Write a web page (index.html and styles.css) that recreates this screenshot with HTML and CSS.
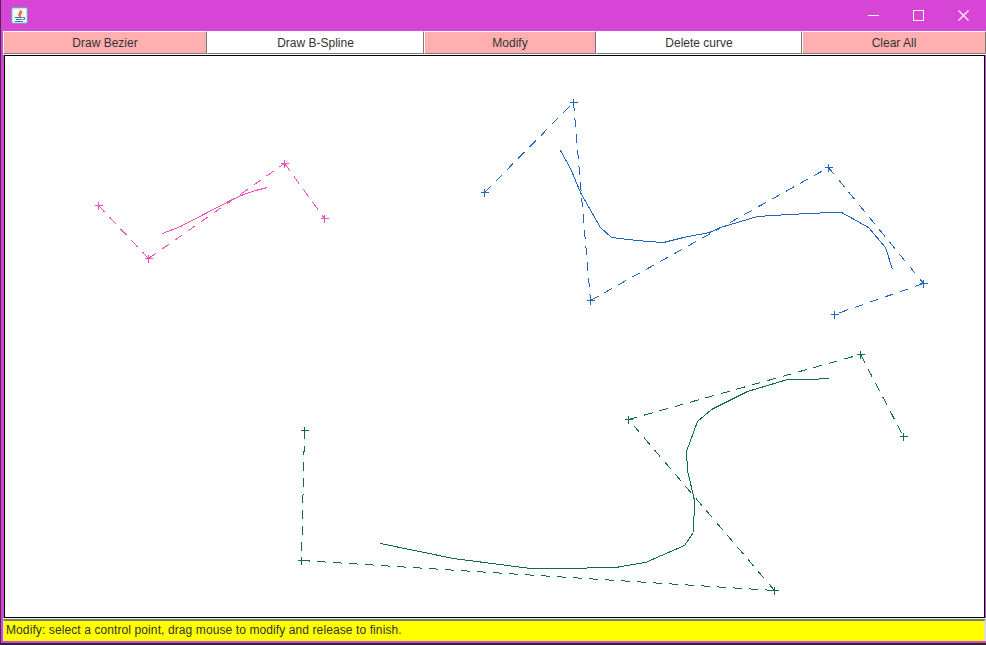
FILE: index.html
```html
<!DOCTYPE html>
<html lang="en">

<head>
    <meta charset="UTF-8">
    <title>Curves</title>
    <link rel="stylesheet" href="styles.css">
</head>

<body>
    <div class="window">
        <div class="titlebar">
            <svg class="app-icon" width="17" height="17" viewBox="0 0 17 17">
                <rect x="0.5" y="0.5" width="16" height="16" rx="2" fill="#cfdfea" stroke="#7f98ac" />
                <rect x="2" y="2" width="13" height="13" rx="1" fill="#f4f8fa" />
                <path d="M9.500 3C10.500 5 7 6 8 8.500C8.500 9.500 9 9.500 9 9.500C8.500 8 10.500 6.500 11 4.500" fill="none" stroke="#e8762a" stroke-width="1.500" />
                <path d="M4 10.500H11M5 12.500H11M4 14.500H12" stroke="#3f76a0" stroke-width="1" />
                <path d="M11.500 10.500H13.500V12.500H12" fill="none" stroke="#3f76a0" stroke-width="1" />
            </svg>
            <div class="window-controls">
                <svg width="11" height="11" viewBox="0 0 11 11"><path d="M0 5.500H11" stroke="#fff" /></svg>
                <svg width="11" height="11" viewBox="0 0 11 11"><rect x="0.500" y="0.500" width="10" height="10" fill="none" stroke="#fff" /></svg>
                <svg width="11" height="11" viewBox="0 0 11 11"><path d="M0.500 0.500L10.500 10.500M10.500 0.500L0.500 10.500" stroke="#fff" stroke-width="1.200" /></svg>
            </div>
        </div>

        <div class="toolbar">
            <button class="tool tool-bezier pink">Draw Bezier</button>
            <button class="tool tool-bspline">Draw B-Spline</button>
            <button class="tool tool-modify pink">Modify</button>
            <button class="tool tool-delete">Delete curve</button>
            <button class="tool tool-clear pink">Clear All</button>
        </div>

        <div class="canvas">
            <!-- viewBox is in window coordinates, canvas inner box starts at 5,56 -->
            <svg class="drawing" width="978" height="561" viewBox="5 56 978 561">
                <g class="curve pink-curve" transform="translate(0.5 0.5)">
                    <line x1="98" y1="205" x2="148" y2="258" />
                    <line x1="148" y1="258" x2="284" y2="163" />
                    <line x1="284" y1="163" x2="324" y2="218" />
                    <path class="cross" d="M94 205H102M98 201V209M144 258H152M148 254V262M280 163H288M284 159V167M320 218H328M324 214V222" />
                    <polyline points="162,233 180,226 205,213 230,200 243,194 255,190 267,187" />
                </g>
                <g class="curve blue-curve" transform="translate(0.5 0.5)">
                    <line x1="484" y1="192" x2="573" y2="102" />
                    <line x1="573" y1="102" x2="590" y2="300" />
                    <line x1="590" y1="300" x2="828" y2="167" />
                    <line x1="828" y1="167" x2="923" y2="283" />
                    <line x1="923" y1="283" x2="834" y2="314" />
                    <path class="cross" d="M480 192H488M484 188V196M569 102H577M573 98V106M586 300H594M590 296V304M824 167H832M828 163V171M919 283H927M923 279V287M830 314H838M834 310V318" />
                    <polyline points="560,150 570,168 580,192 592,213 600,227 611,237 627,239 647,241 663,242 683,237 709,232 720,227 757,216 788,214 830,212 841,212 852,218 868,227 885,247 892,269" />
                </g>
                <g class="curve green-curve" transform="translate(0.5 0.5)">
                    <line x1="304" y1="430" x2="301" y2="560" />
                    <line x1="301" y1="560" x2="774" y2="590" />
                    <line x1="774" y1="590" x2="628" y2="419" />
                    <line x1="628" y1="419" x2="860" y2="354" />
                    <line x1="860" y1="354" x2="903" y2="436" />
                    <path class="cross" d="M300 430H308M304 426V434M297 560H305M301 556V564M770 590H778M774 586V594M624 419H632M628 415V423M856 354H864M860 350V358M899 436H907M903 432V440" />
                    <polyline points="380,543 453,558 530,568 573,568 600,567 615,567 645,562 684,545 693,532 694,500 687,470 686,451 697,421 711,409 747,391 787,379 809,379 829,378" />
                </g>
            </svg>
        </div>

        <div class="status">Modify: select a control point, drag mouse to modify and release to finish.</div>
    </div>
</body>

</html>
```

FILE: styles.css
```css
* {
    margin: 0;
    padding: 0;
    box-sizing: border-box;
}

html,
body {
    width: 986px;
    height: 645px;
    overflow: hidden;
    background: #2b2b2b;
}

.window {
    height: 643px;
    padding: 0 0 2px 3px;
    background: #d645d6;
    border-left: 1px solid #4a2a4a;
    font-family: "Liberation Sans", Arial, sans-serif;
    font-size: 12px;
    color: #333;
}

.titlebar {
    display: flex;
    align-items: center;
    justify-content: space-between;
    height: 31px;
    margin-left: -3px;
    padding: 0 17px 0 10px;
}

.window-controls {
    display: flex;
    gap: 34px;
}

.window-controls svg,
.app-icon {
    display: block;
}

.toolbar {
    display: flex;
    height: 24px;
    margin-left: -1px;
    background: #fff;
}

.tool {
    height: 23px;
    background: #fff;
    border: 1px solid;
    border-color: #fff #7a7a7a #7a7a7a #fff;
    font: inherit;
    color: inherit;
}

.pink {
    background: #ffafaf;
}

.tool-bezier {
    width: 204px;
}

.tool-bspline {
    width: 217px;
}

.tool-modify {
    width: 172px;
}

.tool-delete {
    width: 206px;
}

.tool-clear {
    width: 184px;
}

.canvas {
    height: 563px;
    margin-right: 1px;
    background: #fff;
    border: 1px solid #000;
}

.drawing {
    display: block;
    shape-rendering: crispEdges;
}

.curve line {
    stroke-width: 1;
    stroke-dasharray: 9 7;
}

.curve polyline {
    fill: none;
    stroke-width: 1;
}

.pink-curve line,
.pink-curve polyline,
.pink-curve .cross {
    stroke: #f04fc0;
}

.blue-curve line,
.blue-curve polyline,
.blue-curve .cross {
    stroke: #1f66b8;
}

.green-curve line,
.green-curve polyline,
.green-curve .cross {
    stroke: #0f6a50;
}

.status {
    height: 22px;
    margin: 1px 0 0 -1px;
    padding: 1px 0 0 2px;
    background: #ff0;
    border-top: 2px solid #7a7a7a;
    border-left: 1px solid #ddd;
    border-right: 2px solid #ddd;
    box-shadow: 0 -1px 0 #eee;
    letter-spacing: 0.1px;
    line-height: 16px;
}
```
